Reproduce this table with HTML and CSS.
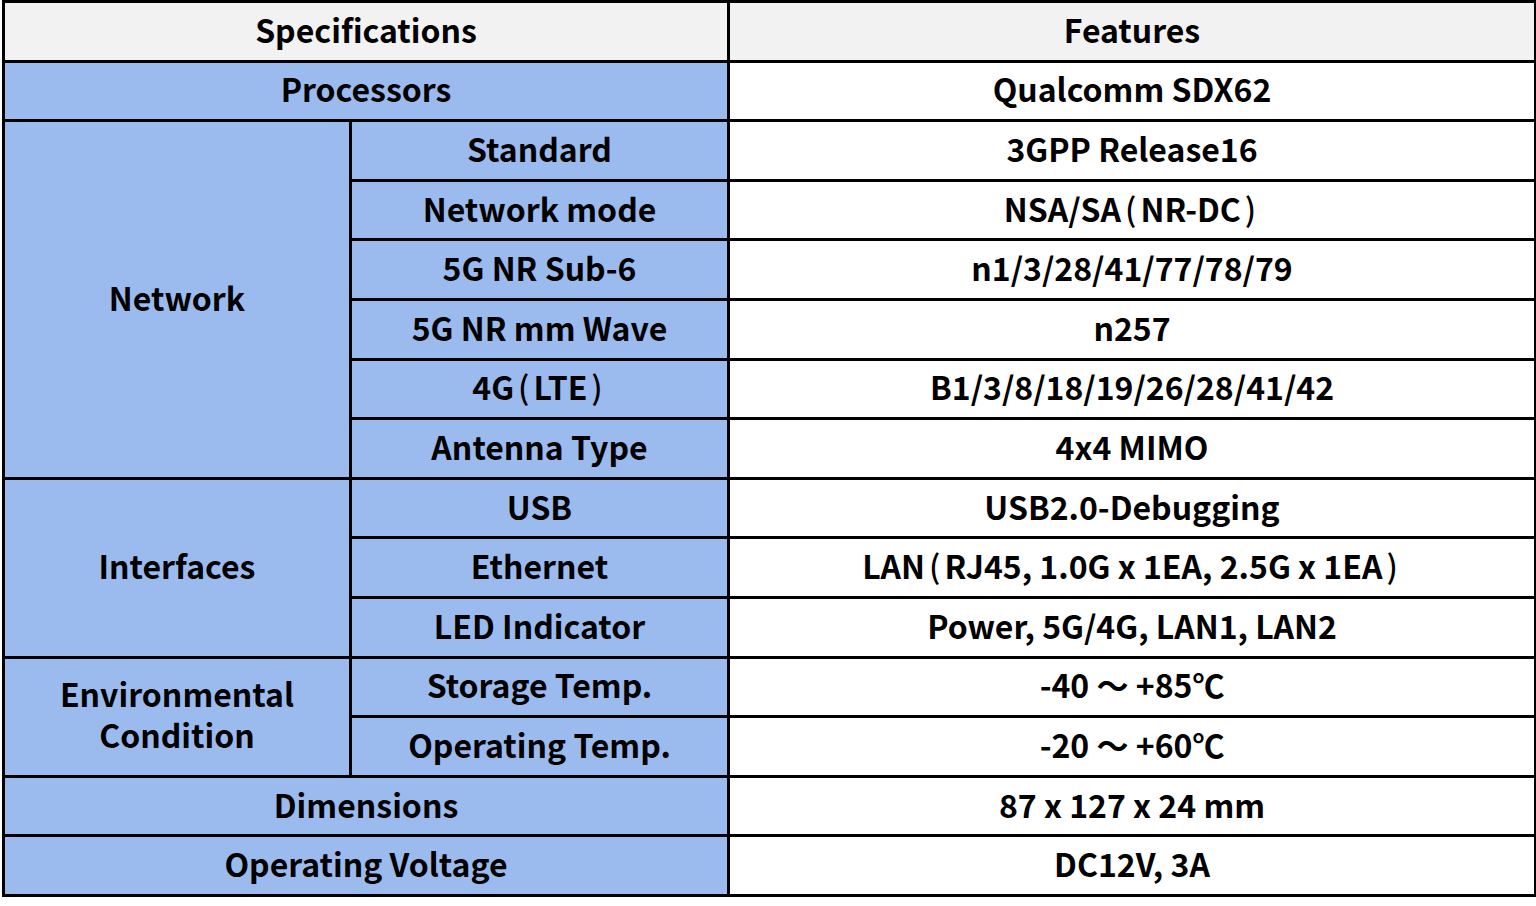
FILE: index.html
```html
<!DOCTYPE html>
<html lang="en">
<head>
<meta charset="utf-8">
<link rel="stylesheet" href="styles.css">
</head>
<body>
<table class="spec">
  <colgroup>
    <col class="c1"><col class="c2"><col class="c3">
  </colgroup>
  <tr class="head"><th colspan="2">Specifications</th><th>Features</th></tr>
  <tr><td class="lbl" colspan="2">Processors</td><td>Qualcomm SDX62</td></tr>
  <tr><td class="lbl" rowspan="6">Network</td><td class="lbl">Standard</td><td>3GPP Release16</td></tr>
  <tr><td class="lbl">Network mode</td><td>NSA/SA<span class="p">(</span>NR-DC<span class="p">)</span></td></tr>
  <tr><td class="lbl">5G NR Sub-6</td><td>n1/3/28/41/77/78/79</td></tr>
  <tr><td class="lbl">5G NR mm Wave</td><td>n257</td></tr>
  <tr><td class="lbl">4G<span class="p">(</span>LTE<span class="p">)</span></td><td>B1/3/8/18/19/26/28/41/42</td></tr>
  <tr><td class="lbl">Antenna Type</td><td>4x4 MIMO</td></tr>
  <tr><td class="lbl" rowspan="3">Interfaces</td><td class="lbl">USB</td><td>USB2.0-Debugging</td></tr>
  <tr><td class="lbl">Ethernet</td><td>LAN<span class="p">(</span>RJ45, 1.0G x 1EA, 2.5G x 1EA<span class="p">)</span></td></tr>
  <tr><td class="lbl">LED Indicator</td><td>Power, 5G/4G, LAN1, LAN2</td></tr>
  <tr><td class="lbl multi" rowspan="2">Environmental<br>Condition</td><td class="lbl">Storage Temp.</td><td>-40 ～ +85℃</td></tr>
  <tr><td class="lbl">Operating Temp.</td><td>-20 ～ +60℃</td></tr>
  <tr><td class="lbl" colspan="2">Dimensions</td><td>87 x 127 x 24 mm</td></tr>
  <tr><td class="lbl" colspan="2">Operating Voltage</td><td>DC12V, 3A</td></tr>
</table>
</body>
</html>
```
FILE: styles.css
```css
html, body {
  background: #ffffff;
}
body {
  margin: 0 0 0 2px;
  font-family: "Noto Sans CJK JP", "Noto Sans", sans-serif;
  color: #000;
}
.spec {
  border-collapse: collapse;
  width: 1532px;
  table-layout: fixed;
}
.c1 { width: 347px; }
.c2 { width: 378px; }
.c3 { width: 807px; }
.spec tr {
  height: 59.6px;
}
.spec th, .spec td {
  border: 3px solid #000;
  padding: 0 0 5px 0;
  text-align: center;
  vertical-align: middle;
  font-size: 32px;
  font-weight: 700;
  line-height: 40px;
  white-space: nowrap;
  background: #ffffff;
}
.spec .head th {
  background: #f2f2f2;
}
.spec td.lbl {
  background: #9bbbee;
}
.spec td.multi {
  line-height: 41px;
}
.p {
  display: inline-block;
  padding: 0 4px;
  font-weight: 500;
}
```
